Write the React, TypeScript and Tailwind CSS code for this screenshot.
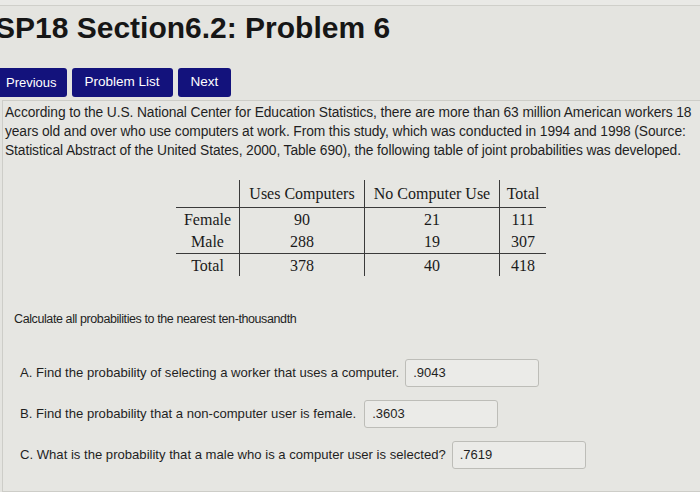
import React from 'react';

const ROWS = [
  { label: 'Female', uses: '90', none: '21', total: '111' },
  { label: 'Male', uses: '288', none: '19', total: '307' },
  { label: 'Total', uses: '378', none: '40', total: '418' },
];

const QUESTIONS = [
  { text: 'A. Find the probability of selecting a worker that uses a computer.', answer: '.9043', gap: 'gap-[6px]' },
  { text: 'B. Find the probability that a non-computer user is female.', answer: '.3603', gap: 'gap-[8px]' },
  { text: 'C. What is the probability that a male who is a computer user is selected?', answer: '.7619', gap: 'gap-[6px]' },
];

export default function App() {
  return (
    <div className="w-[700px] h-[492px] overflow-hidden bg-[#e4e4e0] text-[#1f1f1f] font-['Liberation_Sans',Arial,sans-serif]">
      {/* top edge of the window */}
      <div className="h-[6px] border-b border-[#cfcfca] bg-[#e9e9e6]" />

      <h1 className="-ml-[5px] mt-[6px] text-[30px] leading-[32px] font-bold text-[#161616] whitespace-nowrap">
        SP18 Section6.2: Problem 6
      </h1>

      <div className="-ml-[4px] mt-[24px] flex gap-[5px]">
        <button className="h-[29px] px-[10px] rounded-[3px] bg-[#13127c] text-white text-[13px]">Previous</button>
        <button className="h-[29px] px-[13px] rounded-[3px] bg-[#13127c] text-white text-[13.5px]">Problem List</button>
        <button className="h-[29px] px-[13px] rounded-[3px] bg-[#13127c] text-white text-[13.5px]">Next</button>
      </div>

      {/* problem panel */}
      <div className="mt-[3px] ml-[2px] h-[392px] border-t border-l border-b border-[#cdcdc8] bg-[#e6e6e2] pl-[2px] pt-[2px]">
        <p className="text-[13.8px] leading-[19px] whitespace-nowrap tracking-[-0.1px]">
          According to the U.S. National Center for Education Statistics, there are more than 63 million American workers 18
          <br />
          years old and over who use computers at work. From this study, which was conducted in 1994 and 1998 (Source:
          <br />
          Statistical Abstract of the United States, 2000, Table 690), the following table of joint probabilities was developed.
        </p>

        {/* joint table */}
        <div className="mt-[20px] ml-[171px] font-['Liberation_Serif','Times_New_Roman',serif] text-[16px] text-[#1a1a1a]">
          <div className="grid grid-cols-[63px_125px_135px_47px]">
            <div className="h-[27px]" />
            <div className="h-[27px] border-l border-[#3a3a3a] text-center leading-[27px]">Uses Computers</div>
            <div className="h-[27px] border-l border-[#3a3a3a] text-center leading-[27px]">No Computer Use</div>
            <div className="h-[27px] border-l border-[#3a3a3a] text-center leading-[27px]">Total</div>
            {ROWS.map((r, i) => {
              const line = i === 0 || i === 2 ? 'border-t border-[#3a3a3a]' : '';
              return (
                <React.Fragment key={r.label}>
                  <div className={`h-[23px] leading-[23px] text-center ${line}`}>{r.label}</div>
                  <div className={`h-[23px] leading-[23px] text-center border-l border-[#3a3a3a] ${line}`}>{r.uses}</div>
                  <div className={`h-[23px] leading-[23px] text-center border-l border-[#3a3a3a] ${line}`}>{r.none}</div>
                  <div className={`h-[23px] leading-[23px] text-center border-l border-[#3a3a3a] ${line}`}>{r.total}</div>
                </React.Fragment>
              );
            })}
          </div>
        </div>

        <p className="mt-[35px] ml-[9px] text-[12.5px] leading-[16px] tracking-[-0.4px] whitespace-nowrap">
          Calculate all probabilities to the nearest ten-thousandth
        </p>

        <div className="mt-[32px] ml-[15px] flex flex-col gap-[13px]">
          {QUESTIONS.map((q) => (
            <div key={q.answer} className={`flex items-center ${q.gap}`}>
              <span className="text-[13.1px] whitespace-nowrap">{q.text}</span>
              <div className="h-[28px] w-[134px] rounded-[3px] border border-[#bdbdb8] bg-[#ebebe8] px-[7px] text-[13px] leading-[26px]">
                {q.answer}
              </div>
            </div>
          ))}
        </div>
      </div>
    </div>
  );
}
